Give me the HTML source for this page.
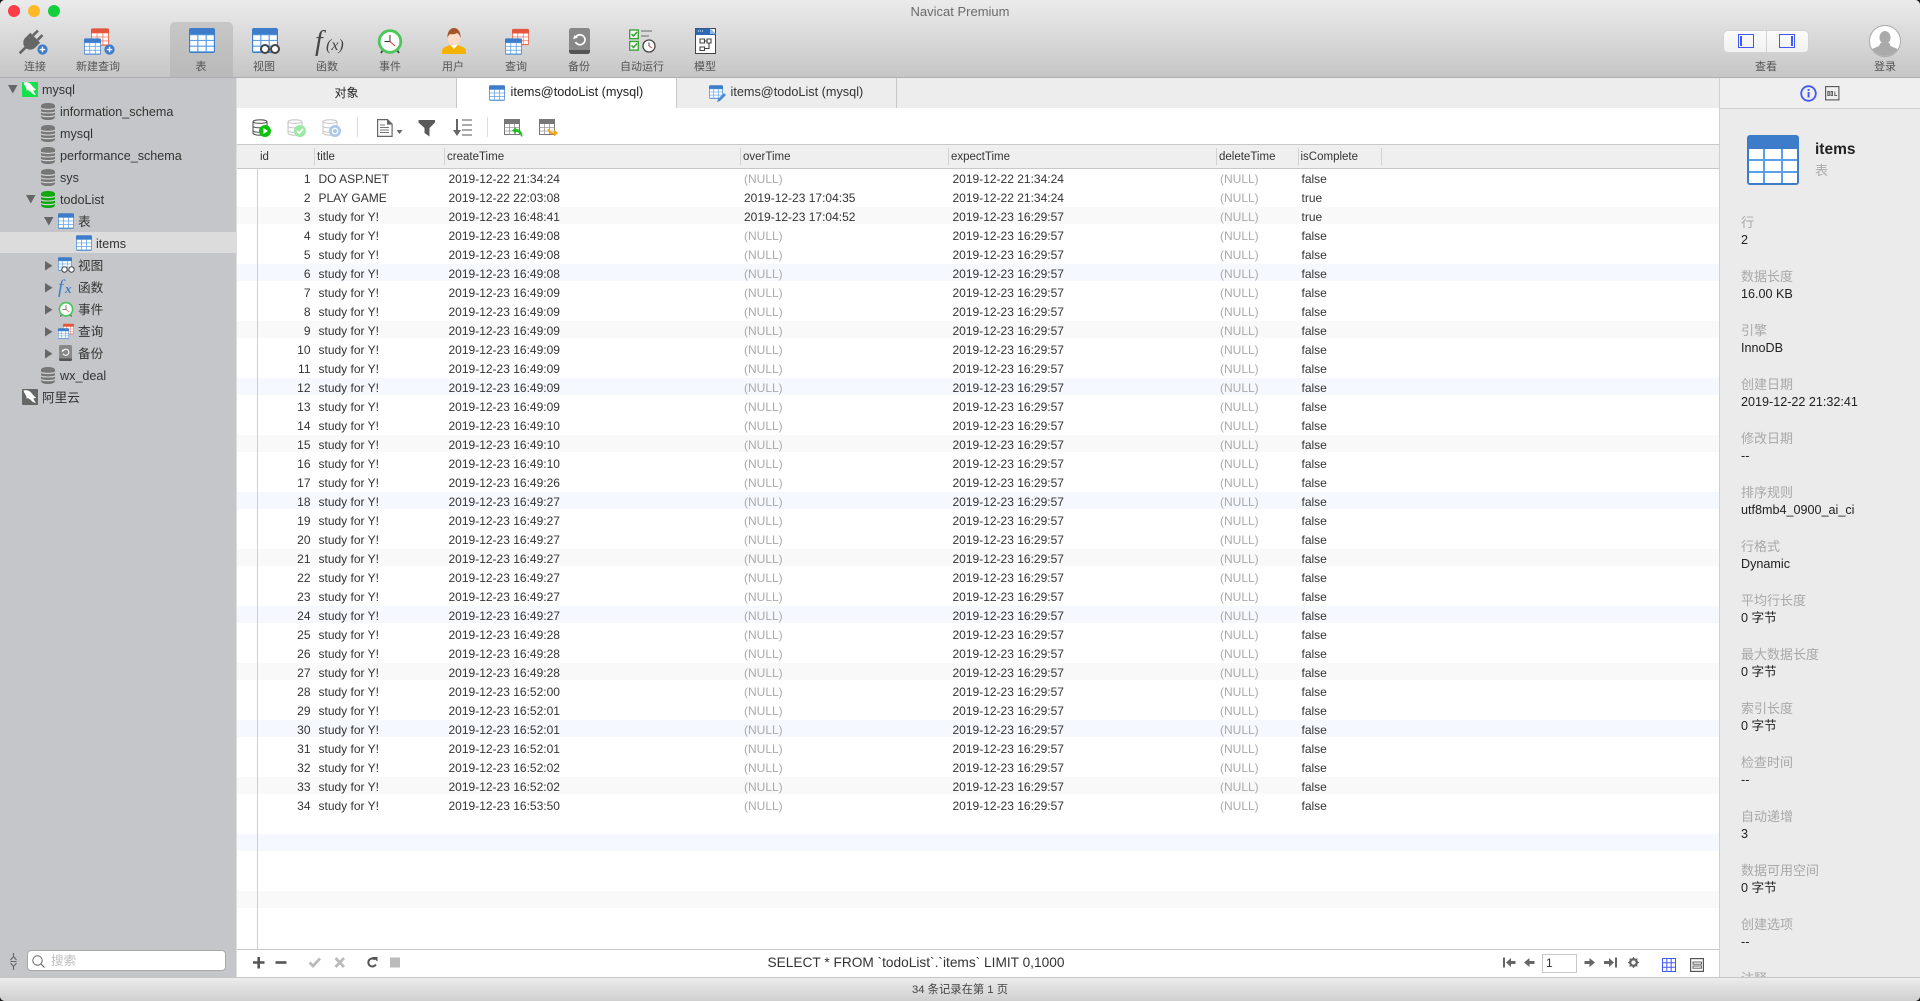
<!DOCTYPE html>
<html><head><meta charset="utf-8"><title>Navicat Premium</title>
<style>
*{margin:0;padding:0;box-sizing:border-box}
html,body{width:1920px;height:1001px;overflow:hidden;background:#1a1a1a}
body{font-family:"Liberation Sans","Noto Sans CJK SC",sans-serif;color:#333;position:relative}
#w{position:absolute;left:0;top:0;width:1920px;height:1001px;border-radius:5px;overflow:hidden;background:#fff}
.a{position:absolute}
svg.a{overflow:visible}
#tb{left:0;top:0;width:1920px;height:78px;background:linear-gradient(#ebebeb,#c6c6c6);border-bottom:1px solid #aeaeae}
.tl{position:absolute;top:61px;width:80px;margin-left:-40px;text-align:center;font-size:11px;line-height:13px;color:#555}
#sb{left:0;top:78px;width:236px;height:899px;background:#c5c6c9}
.s{position:absolute;font-size:12.6px;line-height:16px;color:#333;white-space:nowrap}
#bt{left:237px;top:78px;width:1482px;height:30px;background:#ededed}
#sub{left:237px;top:108px;width:1482px;height:37px;background:#fff;border-bottom:1px solid #c8c8c8}
#hd{left:237px;top:145px;width:1482px;height:24px;background:#efefef;border-bottom:1px solid #c8c8c8}
.hs{position:absolute;top:148px;width:1px;height:17px;background:#d2d2d2}
.ht{position:absolute;top:150px;font-size:11.5px;line-height:15px;color:#333}
#g{left:237px;top:169px;width:1482px;height:780px;background:#fff;overflow:hidden}
.bg{position:absolute;left:0;width:1482px;height:17px;background:#f9f9f9}
.bb{position:absolute;left:0;width:1482px;height:17px;background:#f5f8ff}
#rows{position:absolute;left:0;top:0}
.r{position:relative;height:19px;font-size:12px;line-height:19px;width:1482px;white-space:nowrap}
.r span{position:absolute;top:1px}
.r span:nth-child(1){left:23px;width:50.5px;text-align:right}
.r span:nth-child(2){left:81.5px}
.r span:nth-child(3){left:211.5px}
.r span:nth-child(4){left:507px}
.r span:nth-child(5){left:715.5px}
.r span:nth-child(6){left:983px}
.r span:nth-child(7){left:1064.5px}
.r .n{color:#aaa}
#vl{left:257px;top:169px;width:1px;height:780px;background:#cfcfcf}
#bb{left:237px;top:949px;width:1482px;height:28px;background:#fff;border-top:1px solid #c8c8c8}
#rp{left:1719px;top:78px;width:201px;height:899px;background:#ebebeb;border-left:1px solid #d0d0d0;overflow:hidden}
.k{position:absolute;left:21px;font-size:13px;line-height:16px;color:#a8a8a8;white-space:nowrap}
.v{position:absolute;left:21px;font-size:12.6px;line-height:16px;color:#222;white-space:nowrap}
#st{left:0;top:977px;width:1920px;height:24px;background:linear-gradient(#ececec,#cfcfcf);border-top:1px solid #c6c6c6;text-align:center;font-size:11.3px;line-height:24px;color:#444}
</style></head><body><div id="w">
<svg width="0" height="0" style="position:absolute"><defs>
<symbol id="t" viewBox="0 0 26 25"><rect width="26" height="25" rx="2" fill="#3d7cc9"/><rect x="1" y="6.5" width="24" height="17.5" fill="#5b9fe8"/><g fill="#fff"><rect x="1.2" y="7.3" width="7" height="4.6"/><rect x="9.4" y="7.3" width="7.2" height="4.6"/><rect x="17.8" y="7.3" width="7" height="4.6"/><rect x="1.2" y="13" width="7" height="4.6"/><rect x="9.4" y="13" width="7.2" height="4.6"/><rect x="17.8" y="13" width="7" height="4.6"/><rect x="1.2" y="18.8" width="7" height="4.4"/><rect x="9.4" y="18.8" width="7.2" height="4.4"/><rect x="17.8" y="18.8" width="7" height="4.4"/></g></symbol>
<symbol id="tr" viewBox="0 0 26 25"><rect width="26" height="25" rx="2" fill="#e4573d"/><rect x="1" y="6.5" width="24" height="17.5" fill="#ee7a62"/><g fill="#fff"><rect x="1.2" y="7.3" width="7" height="4.6"/><rect x="9.4" y="7.3" width="7.2" height="4.6"/><rect x="17.8" y="7.3" width="7" height="4.6"/><rect x="1.2" y="13" width="7" height="4.6"/><rect x="9.4" y="13" width="7.2" height="4.6"/><rect x="17.8" y="13" width="7" height="4.6"/><rect x="1.2" y="18.8" width="7" height="4.4"/><rect x="9.4" y="18.8" width="7.2" height="4.4"/><rect x="17.8" y="18.8" width="7" height="4.4"/></g></symbol>
<symbol id="db" viewBox="0 0 14 17"><path d="M0 3C0 1 3 0 7 0s7 1 7 3v11c0 2-3 3-7 3s-7-1-7-3z" fill="currentColor"/><path d="M0 5.2c2 1.6 12 1.6 14 0M0 8.8c2 1.6 12 1.6 14 0M0 12.4c2 1.6 12 1.6 14 0" fill="none" stroke="#d5d5d8" stroke-width="1.1"/></symbol>
<symbol id="dbo" viewBox="0 0 16 17"><path d="M1 3C1 1.6 4 .8 8 .8S15 1.600 15 3v11c0 1.400-3 2.200-7 2.200S1 15.400 1 14z" fill="#fff" stroke="currentColor" stroke-width="1.100"/><path d="M1 3c2 1.800 12 1.800 14 0M1 7.500c2 1.800 12 1.800 14 0M1 12c2 1.800 12 1.800 14 0" fill="none" stroke="currentColor" stroke-width="1.100"/></symbol>
<symbol id="cl" viewBox="0 0 26 26"><path d="M3 7 7 2.500 10 4.500 5 9zM23 7 19 2.500 16 4.500 21 9z" fill="#3fae4c"/><path d="M6 22 4 25M20 22l2 3" stroke="#444" stroke-width="1.800"/><circle cx="13" cy="13.500" r="10.800" fill="#fff" stroke="#4cc75a" stroke-width="2.800"/><path d="M13 13.500H7.500" stroke="#333" stroke-width="1.100"/><path d="M13 7v6.500" stroke="#333" stroke-width="1"/><path d="M13 13.500l5 4.500" stroke="#e33" stroke-width="1"/></symbol>
<symbol id="bk" viewBox="0 0 21 26"><rect width="21" height="26" rx="2.500" fill="#888"/><path d="M0 22h21v1.500a2.500 2.500 0 0 1-2.500 2.500h-16A2.500 2.500 0 0 1 0 23.500z" fill="#555"/><path d="M6.500 9.500a5 5 0 1 1 0 4.500" fill="none" stroke="#fff" stroke-width="1.700"/><path d="M3.500 10.500h5L6 7z" fill="#fff" transform="rotate(-20 6 9)"/></symbol>
<symbol id="dol" viewBox="0 0 16 16"><path d="M1.500 1.500c3-1 6 0 8 2.500 1.500 2 2.800 3.500 4.500 4.500-.7.800-1.700 1-2.700.8.500 1.500 1.300 3 2.700 4.700-2.300-.2-4.300-1.500-5.500-3.500-1-.2-2-.8-2.600-1.800-.3.500-.8.800-1.400.8.200-1-.1-2-.5-3C3.100 5.200 2 3.500 1.500 1.500z" fill="#fff"/></symbol>
<symbol id="pl" viewBox="0 0 12 12"><circle cx="6" cy="6" r="5.600" fill="#3d7cc9"/><path d="M6 3v6M3 6h6" stroke="#fff" stroke-width="1.500"/></symbol>
<symbol id="tg" viewBox="0 0 18 18"><rect x=".5" y=".5" width="15" height="15" fill="#fff" stroke="#777"/><rect x=".5" y=".5" width="15" height="4.500" fill="#777"/><path d="M.5 8.500h15M.5 12h15M5.500 5v10M10.500 5v10" stroke="#999" stroke-width=".8"/></symbol>
</defs></svg>

<div id="tb" class="a"></div>
<div class="a" style="left:170px;top:22px;width:63px;height:55px;border-radius:5px 5px 0 0;background:linear-gradient(#c7c7c7,#b9b9b9)"></div>
<div class="a" style="left:0;width:1920px;top:4px;text-align:center;font-size:13px;line-height:16px;color:#6b6b6b">Navicat Premium</div>
<div class="a" style="left:8px;top:5px;width:12px;height:12px;border-radius:50%;background:#fc3d48"></div>
<div class="a" style="left:28px;top:5px;width:12px;height:12px;border-radius:50%;background:#fdb926"></div>
<div class="a" style="left:48px;top:5px;width:12px;height:12px;border-radius:50%;background:#11cf3d"></div>

<!-- toolbar icons -->
<svg class="a" style="left:17px;top:27px" width="30" height="29" viewBox="0 0 30 29"><g transform="rotate(45 14 15)" fill="#666"><path d="M7 9h14v7a7 7 0 0 1-14 0z"/><rect x="9.500" y="2" width="2.600" height="7"/><rect x="15.900" y="2" width="2.600" height="7"/><rect x="12.700" y="22" width="2.600" height="9"/></g></svg>
<svg class="a" style="left:36.500px;top:44px" width="11" height="11"><use href="#pl"/></svg>
<svg class="a" style="left:91px;top:28px" width="18" height="18"><use href="#tr"/></svg>
<svg class="a" style="left:84px;top:38px" width="17" height="17"><use href="#t"/></svg>
<svg class="a" style="left:104px;top:44px" width="11" height="11"><use href="#pl"/></svg>
<svg class="a" style="left:189px;top:28px" width="26" height="25"><use href="#t"/></svg>
<svg class="a" style="left:252px;top:28px" width="26" height="25"><use href="#t"/></svg>
<svg class="a" style="left:258px;top:44px" width="23" height="10" viewBox="0 0 23 10"><circle cx="7" cy="5" r="4" fill="#fff" stroke="#444" stroke-width="2"/><circle cx="17" cy="5" r="4" fill="#fff" stroke="#444" stroke-width="2"/></svg>
<svg class="a" style="left:312px;top:26px" width="34" height="30" viewBox="0 0 34 30"><text x="3" y="24" font-family="Liberation Serif,serif" font-style="italic" font-size="28" fill="#444">f</text><text x="14" y="24" font-family="Liberation Serif,serif" font-style="italic" font-size="16" fill="#444">(x)</text></svg>
<svg class="a" style="left:377px;top:28px" width="26" height="26"><use href="#cl"/></svg>
<svg class="a" style="left:442px;top:28px" width="24" height="26" viewBox="0 0 24 26"><path d="M0 26v-3c0-3 3-4 8-6h8c5 2 8 3 8 6v3z" fill="#f4b300"/><ellipse cx="12" cy="10" rx="6.500" ry="8.500" fill="#fbdcc8"/><path d="M5.500 10C5 4 8 0 12 0s7 4 6.500 10c-1-3-2-4.500-3.500-5-2 1.500-6 1.500-7 1-.8.800-2 2-2.500 4z" fill="#a4552a"/><path d="M8.500 17 12 21l3.500-4z" fill="#fff"/></svg>
<svg class="a" style="left:512px;top:28px" width="17" height="18"><use href="#tr"/></svg>
<svg class="a" style="left:505px;top:38px" width="17" height="17"><use href="#t"/></svg>
<svg class="a" style="left:569px;top:28px" width="21" height="26"><use href="#bk"/></svg>
<svg class="a" style="left:629px;top:29px" width="28" height="25" viewBox="0 0 28 25"><rect x=".7" y="1" width="8.600" height="8.600" fill="#fff" stroke="#3aa535" stroke-width="1.400"/><rect x=".7" y="12.500" width="8.600" height="8.600" fill="#fff" stroke="#3aa535" stroke-width="1.400"/><path d="M2.500 5l2 2 3.500-4M2.500 16.500l2 2 3.500-4" fill="none" stroke="#3aa535" stroke-width="1.600"/><path d="M12 2h11M12 7h8" stroke="#999" stroke-width="1.700"/><circle cx="20" cy="17" r="6" fill="#fff" stroke="#444" stroke-width="1.300"/><path d="M20 17v-3.500" stroke="#444"/><path d="M20 17l3 2" stroke="#e33"/></svg>
<svg class="a" style="left:695px;top:28px" width="21" height="26" viewBox="0 0 21 26"><rect x=".5" y=".5" width="20" height="25" fill="#fff" stroke="#444"/><path d="M.5.500h14l6 5.500v1H.5z" fill="#2f69b3"/><path d="M15 0l6 6h-6z" fill="#8ab8ec"/><path d="M3 3h1M5 3h1M7 3h1" stroke="#fff"/><path d="M5 11h4.500v4H5zM12 11h4v4h-4zM5 19h4.500v3.500H5zM9.500 13H12M14 15v5.500H9.500" fill="none" stroke="#444" stroke-width="1.100"/></svg>
<div class="a" style="left:1723px;top:30px;width:86px;height:23px;background:linear-gradient(#fbfbfb,#f1f1f1);border:1px solid #d3d3d3;border-radius:5px"></div>
<div class="a" style="left:1766px;top:30px;width:1px;height:23px;background:#d3d3d3"></div>
<svg class="a" style="left:1738px;top:34px" width="16" height="14"><rect x=".5" y=".5" width="15" height="13" fill="none" stroke="#4058f5"/><rect x="2" y="2" width="2" height="10" fill="#4058f5"/></svg>
<svg class="a" style="left:1779px;top:34px" width="16" height="14"><rect x=".5" y=".5" width="15" height="13" fill="none" stroke="#4058f5"/><rect x="12" y="2" width="2" height="10" fill="#4058f5"/></svg>
<svg class="a" style="left:1869px;top:25px" width="32" height="32" viewBox="0 0 32 32"><circle cx="16" cy="16" r="15.500" fill="#fff" stroke="#aaa"/><clipPath id="av"><circle cx="16" cy="16" r="15"/></clipPath><g clip-path="url(#av)" fill="#aaa"><ellipse cx="16" cy="12.500" rx="5.500" ry="6.500"/><path d="M11.500 18h9l1 3 7 3v8H3v-8l7-3z"/></g></svg>
<div class="tl" style="left:35px">连接</div><div class="tl" style="left:98px">新建查询</div><div class="tl" style="left:201px">表</div><div class="tl" style="left:264px">视图</div><div class="tl" style="left:327px">函数</div><div class="tl" style="left:390px">事件</div><div class="tl" style="left:453px">用户</div><div class="tl" style="left:516px">查询</div><div class="tl" style="left:579px">备份</div><div class="tl" style="left:642px">自动运行</div><div class="tl" style="left:705px">模型</div><div class="tl" style="left:1766px">查看</div><div class="tl" style="left:1885px">登录</div>

<!-- sidebar -->
<div id="sb" class="a"></div>
<div class="a" style="left:236px;top:78px;width:1px;height:899px;background:#dcdcdc"></div>
<div class="a" style="left:0;top:232px;width:236px;height:21px;background:#dcdcdc"></div>
<svg class="a" style="left:8px;top:85px" width="10" height="9"><path d="M0 0h9.500L4.800 8.500z" fill="#666"/></svg>
<svg class="a" style="left:26px;top:195px" width="10" height="9"><path d="M0 0h9.500L4.800 8.500z" fill="#666"/></svg>
<svg class="a" style="left:44px;top:217px" width="10" height="9"><path d="M0 0h9.500L4.800 8.500z" fill="#666"/></svg>
<svg class="a" style="left:45px;top:261px" width="9" height="10"><path d="M0 0v9.500L7.500 4.800z" fill="#666"/></svg>
<svg class="a" style="left:45px;top:283px" width="9" height="10"><path d="M0 0v9.500L7.500 4.800z" fill="#666"/></svg>
<svg class="a" style="left:45px;top:305px" width="9" height="10"><path d="M0 0v9.500L7.500 4.800z" fill="#666"/></svg>
<svg class="a" style="left:45px;top:327px" width="9" height="10"><path d="M0 0v9.500L7.500 4.800z" fill="#666"/></svg>
<svg class="a" style="left:45px;top:349px" width="9" height="10"><path d="M0 0v9.500L7.500 4.800z" fill="#666"/></svg>
<div class="a" style="left:22px;top:82px;width:16px;height:15px;background:#14e04a"></div>
<svg class="a" style="left:22px;top:81px" width="16" height="16"><use href="#dol"/></svg>
<div class="a" style="left:22px;top:389px;width:16px;height:16px;background:#666;border-radius:1px"></div>
<svg class="a" style="left:22px;top:389px" width="16" height="16"><use href="#dol"/></svg>
<svg class="a" style="left:41px;top:103px;color:#777" width="14" height="17"><use href="#db"/></svg>
<svg class="a" style="left:41px;top:125px;color:#777" width="14" height="17"><use href="#db"/></svg>
<svg class="a" style="left:41px;top:147px;color:#777" width="14" height="17"><use href="#db"/></svg>
<svg class="a" style="left:41px;top:169px;color:#777" width="14" height="17"><use href="#db"/></svg>
<svg class="a" style="left:41px;top:191px;color:#0fa80f" width="14" height="17"><use href="#db"/></svg>
<svg class="a" style="left:41px;top:367px;color:#777" width="14" height="17"><use href="#db"/></svg>
<svg class="a" style="left:58px;top:213px" width="16" height="16"><use href="#t"/></svg>
<svg class="a" style="left:76px;top:235px" width="16" height="16"><use href="#t"/></svg>
<svg class="a" style="left:58px;top:257px" width="14" height="14"><use href="#t"/></svg>
<svg class="a" style="left:61px;top:266px" width="14" height="7" viewBox="0 0 14 7"><circle cx="3.500" cy="3.500" r="2.700" fill="#fff" stroke="#444"/><circle cx="10.500" cy="3.500" r="2.700" fill="#fff" stroke="#444"/></svg>
<svg class="a" style="left:58px;top:278px" width="17" height="18" viewBox="0 0 17 18"><text x="0" y="15" font-family="Liberation Serif,serif" font-style="italic" font-size="19" fill="#3d7cc9">f</text><text x="7" y="15" font-family="Liberation Serif,serif" font-style="italic" font-weight="bold" font-size="13" fill="#3d7cc9">x</text></svg>
<svg class="a" style="left:58px;top:301px" width="16" height="16"><use href="#cl"/></svg>
<svg class="a" style="left:63px;top:323px" width="11" height="12"><use href="#tr"/></svg>
<svg class="a" style="left:58px;top:328px" width="11" height="11"><use href="#t"/></svg>
<svg class="a" style="left:59px;top:345px" width="13" height="16"><use href="#bk"/></svg>
<div class="s" style="left:42px;top:82px">mysql</div>
<div class="s" style="left:60px;top:104px">information_schema</div>
<div class="s" style="left:60px;top:126px">mysql</div>
<div class="s" style="left:60px;top:148px">performance_schema</div>
<div class="s" style="left:60px;top:170px">sys</div>
<div class="s" style="left:60px;top:192px">todoList</div>
<div class="s" style="left:78px;top:214px">表</div>
<div class="s" style="left:96px;top:236px">items</div>
<div class="s" style="left:78px;top:258px">视图</div>
<div class="s" style="left:78px;top:280px">函数</div>
<div class="s" style="left:78px;top:302px">事件</div>
<div class="s" style="left:78px;top:324px">查询</div>
<div class="s" style="left:78px;top:346px">备份</div>
<div class="s" style="left:60px;top:368px">wx_deal</div>
<div class="s" style="left:42px;top:390px">阿里云</div>
<svg class="a" style="left:9px;top:953px" width="9" height="17" viewBox="0 0 9 17"><path d="M4.500 0v3M4.500 14v3M1.500 7l3-3.500 3 3.500M1.500 10l3 3.500 3-3.500M1.500 8.500h6" fill="none" stroke="#666" stroke-width="1.100"/></svg>
<div class="a" style="left:27px;top:950px;width:199px;height:21px;background:#fff;border:1px solid #a8a8a8;border-radius:4px"></div>
<svg class="a" style="left:32px;top:955px" width="13" height="13" viewBox="0 0 13 13"><circle cx="5.500" cy="5.500" r="4.700" fill="none" stroke="#666"/><path d="M9 9l3.500 3.500" stroke="#666" stroke-width="1.200"/></svg>
<div class="s" style="left:51px;top:953px;color:#bdbdbd">搜索</div>

<!-- tabs -->
<div id="bt" class="a"></div>
<div class="a" style="left:456px;top:78px;width:1px;height:30px;background:#c8c8c8"></div>
<div class="a" style="left:457px;top:78px;width:219px;height:30px;background:#fff"></div>
<div class="a" style="left:676px;top:78px;width:1px;height:30px;background:#c8c8c8"></div>
<div class="a" style="left:896px;top:78px;width:1px;height:30px;background:#c8c8c8"></div>
<div class="a" style="left:237px;top:78px;width:219px;text-align:center;font-size:12px;line-height:30px;color:#222">对象</div>
<svg class="a" style="left:489px;top:85px" width="16" height="16"><use href="#t"/></svg>
<div class="a" style="left:510.500px;top:84px;font-size:12.7px;line-height:17px;color:#222;white-space:nowrap">items@todoList (mysql)</div>
<svg class="a" style="left:709px;top:85px" width="14" height="14"><use href="#t"/></svg>
<svg class="a" style="left:717px;top:92px" width="10" height="10" viewBox="0 0 10 10"><path d="M0 10l1-3L7 1l2 2-6 6z" fill="#4a8ad8"/></svg>
<div class="a" style="left:730.500px;top:84px;font-size:12.7px;line-height:17px;color:#333;white-space:nowrap">items@todoList (mysql)</div>

<!-- subtoolbar -->
<div id="sub" class="a"></div>
<svg class="a" style="left:252px;top:119px;color:#555" width="16" height="17"><use href="#dbo"/></svg>
<svg class="a" style="left:259px;top:125px" width="12" height="12" viewBox="0 0 12 12"><circle cx="6" cy="6" r="6" fill="#0cc10c"/><path d="M4.500 3v6L9 6z" fill="#fff"/></svg>
<svg class="a" style="left:287px;top:119px;color:#c8c8c8" width="16" height="17"><use href="#dbo"/></svg>
<svg class="a" style="left:294px;top:125px" width="12" height="12" viewBox="0 0 12 12"><circle cx="6" cy="6" r="6" fill="#9be8a4"/><path d="M3 6l2.200 2.200L9 4" fill="none" stroke="#fff" stroke-width="1.700"/></svg>
<svg class="a" style="left:322px;top:119px;color:#c8c8c8" width="16" height="17"><use href="#dbo"/></svg>
<svg class="a" style="left:329px;top:125px" width="12" height="12" viewBox="0 0 12 12"><circle cx="6" cy="6" r="6" fill="#aac8ea"/><circle cx="6" cy="6" r="2.700" fill="none" stroke="#fff" stroke-width="1.300"/></svg>
<div class="a" style="left:357px;top:117px;width:1px;height:20px;background:#dcdcdc"></div>
<svg class="a" style="left:377px;top:119px" width="26" height="18" viewBox="0 0 26 18"><path d="M.6.600h10l4.500 4.500v12.300H.6z" fill="#fff" stroke="#666" stroke-width="1.200"/><path d="M10 .6v5h5z" fill="#666"/><path d="M3 6h5M3 8.500h9M3 11h9M3 13.500h9" stroke="#777"/><path d="M19.500 11h6L22.500 15z" fill="#666"/></svg>
<svg class="a" style="left:417px;top:119px" width="20" height="18" viewBox="0 0 20 18"><path d="M0 1h16.500v2.500L11 9v8.500L6 14V9L0 3.500z" fill="#5a5a5a" transform="translate(1.500)"/></svg>
<svg class="a" style="left:452px;top:119px" width="20" height="18" viewBox="0 0 20 18"><path d="M5 0v12" stroke="#666" stroke-width="2"/><path d="M1 11h8l-4 6z" fill="#666"/><path d="M10 1h10M10 6h10M10 11h10M10 16h10" stroke="#777" stroke-width="1.200"/></svg>
<div class="a" style="left:487px;top:117px;width:1px;height:20px;background:#dcdcdc"></div>
<svg class="a" style="left:504px;top:119px" width="18" height="18"><use href="#tg"/></svg>
<svg class="a" style="left:512px;top:127px" width="11" height="10" viewBox="0 0 11 10"><path d="M4 0 0 3.500 4 7V5c2.500 0 4 1 5 4.500h1.500C10.500 5 8 2 4 2z" fill="#1fc21f"/></svg>
<svg class="a" style="left:539px;top:119px" width="18" height="18"><use href="#tg"/></svg>
<svg class="a" style="left:547px;top:127px" width="11" height="10" viewBox="0 0 11 10"><path d="M7 2.500 11 6 7 9.500V7.500C4 7.500 1.500 6.500.5 2H2c1 2.500 2.500 3.500 5 3.500z" fill="#f5a11a"/></svg>

<!-- header -->
<div id="hd" class="a"></div>
<div class="hs" style="left:314px"></div><div class="hs" style="left:444px"></div><div class="hs" style="left:740px"></div><div class="hs" style="left:948px"></div><div class="hs" style="left:1216px"></div><div class="hs" style="left:1298px"></div><div class="hs" style="left:1381px"></div>
<div class="ht" style="left:260px">id</div><div class="ht" style="left:317px">title</div><div class="ht" style="left:447px">createTime</div><div class="ht" style="left:743px">overTime</div><div class="ht" style="left:951px">expectTime</div><div class="ht" style="left:1219px">deleteTime</div><div class="ht" style="left:1300.500px">isComplete</div>

<!-- grid -->
<div id="g" class="a">
<div class="bg" style="top:38px"></div><div class="bb" style="top:95px"></div><div class="bg" style="top:152px"></div><div class="bb" style="top:209px"></div><div class="bg" style="top:266px"></div><div class="bb" style="top:323px"></div><div class="bg" style="top:380px"></div><div class="bb" style="top:437px"></div><div class="bg" style="top:494px"></div><div class="bb" style="top:551px"></div><div class="bg" style="top:608px"></div><div class="bb" style="top:665px"></div><div class="bg" style="top:722px"></div>
<div id="rows">
<div class="r"><span>1</span><span>DO ASP.NET</span><span>2019-12-22 21:34:24</span><span class="n">(NULL)</span><span>2019-12-22 21:34:24</span><span class="n">(NULL)</span><span>false</span></div>
<div class="r"><span>2</span><span>PLAY GAME</span><span>2019-12-22 22:03:08</span><span>2019-12-23 17:04:35</span><span>2019-12-22 21:34:24</span><span class="n">(NULL)</span><span>true</span></div>
<div class="r"><span>3</span><span>study for Y!</span><span>2019-12-23 16:48:41</span><span>2019-12-23 17:04:52</span><span>2019-12-23 16:29:57</span><span class="n">(NULL)</span><span>true</span></div>
<div class="r"><span>4</span><span>study for Y!</span><span>2019-12-23 16:49:08</span><span class="n">(NULL)</span><span>2019-12-23 16:29:57</span><span class="n">(NULL)</span><span>false</span></div>
<div class="r"><span>5</span><span>study for Y!</span><span>2019-12-23 16:49:08</span><span class="n">(NULL)</span><span>2019-12-23 16:29:57</span><span class="n">(NULL)</span><span>false</span></div>
<div class="r"><span>6</span><span>study for Y!</span><span>2019-12-23 16:49:08</span><span class="n">(NULL)</span><span>2019-12-23 16:29:57</span><span class="n">(NULL)</span><span>false</span></div>
<div class="r"><span>7</span><span>study for Y!</span><span>2019-12-23 16:49:09</span><span class="n">(NULL)</span><span>2019-12-23 16:29:57</span><span class="n">(NULL)</span><span>false</span></div>
<div class="r"><span>8</span><span>study for Y!</span><span>2019-12-23 16:49:09</span><span class="n">(NULL)</span><span>2019-12-23 16:29:57</span><span class="n">(NULL)</span><span>false</span></div>
<div class="r"><span>9</span><span>study for Y!</span><span>2019-12-23 16:49:09</span><span class="n">(NULL)</span><span>2019-12-23 16:29:57</span><span class="n">(NULL)</span><span>false</span></div>
<div class="r"><span>10</span><span>study for Y!</span><span>2019-12-23 16:49:09</span><span class="n">(NULL)</span><span>2019-12-23 16:29:57</span><span class="n">(NULL)</span><span>false</span></div>
<div class="r"><span>11</span><span>study for Y!</span><span>2019-12-23 16:49:09</span><span class="n">(NULL)</span><span>2019-12-23 16:29:57</span><span class="n">(NULL)</span><span>false</span></div>
<div class="r"><span>12</span><span>study for Y!</span><span>2019-12-23 16:49:09</span><span class="n">(NULL)</span><span>2019-12-23 16:29:57</span><span class="n">(NULL)</span><span>false</span></div>
<div class="r"><span>13</span><span>study for Y!</span><span>2019-12-23 16:49:09</span><span class="n">(NULL)</span><span>2019-12-23 16:29:57</span><span class="n">(NULL)</span><span>false</span></div>
<div class="r"><span>14</span><span>study for Y!</span><span>2019-12-23 16:49:10</span><span class="n">(NULL)</span><span>2019-12-23 16:29:57</span><span class="n">(NULL)</span><span>false</span></div>
<div class="r"><span>15</span><span>study for Y!</span><span>2019-12-23 16:49:10</span><span class="n">(NULL)</span><span>2019-12-23 16:29:57</span><span class="n">(NULL)</span><span>false</span></div>
<div class="r"><span>16</span><span>study for Y!</span><span>2019-12-23 16:49:10</span><span class="n">(NULL)</span><span>2019-12-23 16:29:57</span><span class="n">(NULL)</span><span>false</span></div>
<div class="r"><span>17</span><span>study for Y!</span><span>2019-12-23 16:49:26</span><span class="n">(NULL)</span><span>2019-12-23 16:29:57</span><span class="n">(NULL)</span><span>false</span></div>
<div class="r"><span>18</span><span>study for Y!</span><span>2019-12-23 16:49:27</span><span class="n">(NULL)</span><span>2019-12-23 16:29:57</span><span class="n">(NULL)</span><span>false</span></div>
<div class="r"><span>19</span><span>study for Y!</span><span>2019-12-23 16:49:27</span><span class="n">(NULL)</span><span>2019-12-23 16:29:57</span><span class="n">(NULL)</span><span>false</span></div>
<div class="r"><span>20</span><span>study for Y!</span><span>2019-12-23 16:49:27</span><span class="n">(NULL)</span><span>2019-12-23 16:29:57</span><span class="n">(NULL)</span><span>false</span></div>
<div class="r"><span>21</span><span>study for Y!</span><span>2019-12-23 16:49:27</span><span class="n">(NULL)</span><span>2019-12-23 16:29:57</span><span class="n">(NULL)</span><span>false</span></div>
<div class="r"><span>22</span><span>study for Y!</span><span>2019-12-23 16:49:27</span><span class="n">(NULL)</span><span>2019-12-23 16:29:57</span><span class="n">(NULL)</span><span>false</span></div>
<div class="r"><span>23</span><span>study for Y!</span><span>2019-12-23 16:49:27</span><span class="n">(NULL)</span><span>2019-12-23 16:29:57</span><span class="n">(NULL)</span><span>false</span></div>
<div class="r"><span>24</span><span>study for Y!</span><span>2019-12-23 16:49:27</span><span class="n">(NULL)</span><span>2019-12-23 16:29:57</span><span class="n">(NULL)</span><span>false</span></div>
<div class="r"><span>25</span><span>study for Y!</span><span>2019-12-23 16:49:28</span><span class="n">(NULL)</span><span>2019-12-23 16:29:57</span><span class="n">(NULL)</span><span>false</span></div>
<div class="r"><span>26</span><span>study for Y!</span><span>2019-12-23 16:49:28</span><span class="n">(NULL)</span><span>2019-12-23 16:29:57</span><span class="n">(NULL)</span><span>false</span></div>
<div class="r"><span>27</span><span>study for Y!</span><span>2019-12-23 16:49:28</span><span class="n">(NULL)</span><span>2019-12-23 16:29:57</span><span class="n">(NULL)</span><span>false</span></div>
<div class="r"><span>28</span><span>study for Y!</span><span>2019-12-23 16:52:00</span><span class="n">(NULL)</span><span>2019-12-23 16:29:57</span><span class="n">(NULL)</span><span>false</span></div>
<div class="r"><span>29</span><span>study for Y!</span><span>2019-12-23 16:52:01</span><span class="n">(NULL)</span><span>2019-12-23 16:29:57</span><span class="n">(NULL)</span><span>false</span></div>
<div class="r"><span>30</span><span>study for Y!</span><span>2019-12-23 16:52:01</span><span class="n">(NULL)</span><span>2019-12-23 16:29:57</span><span class="n">(NULL)</span><span>false</span></div>
<div class="r"><span>31</span><span>study for Y!</span><span>2019-12-23 16:52:01</span><span class="n">(NULL)</span><span>2019-12-23 16:29:57</span><span class="n">(NULL)</span><span>false</span></div>
<div class="r"><span>32</span><span>study for Y!</span><span>2019-12-23 16:52:02</span><span class="n">(NULL)</span><span>2019-12-23 16:29:57</span><span class="n">(NULL)</span><span>false</span></div>
<div class="r"><span>33</span><span>study for Y!</span><span>2019-12-23 16:52:02</span><span class="n">(NULL)</span><span>2019-12-23 16:29:57</span><span class="n">(NULL)</span><span>false</span></div>
<div class="r"><span>34</span><span>study for Y!</span><span>2019-12-23 16:53:50</span><span class="n">(NULL)</span><span>2019-12-23 16:29:57</span><span class="n">(NULL)</span><span>false</span></div>
</div></div>
<div id="vl" class="a"></div>

<!-- bottom bar -->
<div id="bb" class="a"></div>
<svg class="a" style="left:253px;top:956px" width="150" height="13" viewBox="0 0 150 13"><path d="M0 6.500h11.500M5.700 1v11.500" stroke="#555" stroke-width="2.600"/><path d="M22.500 6.500h11" stroke="#555" stroke-width="2.600"/><path d="M56.500 6.500l3.500 3.500 7-7.500" fill="none" stroke="#bbb" stroke-width="2.800"/><path d="M82.500 2l8.500 9M91 2l-8.500 9" stroke="#bbb" stroke-width="2.800"/><path d="M122 3.500a4 4 0 1 0 .8 5" fill="none" stroke="#555" stroke-width="2"/><path d="M119 1h5.500v4.500z" fill="#555"/><rect x="137" y="1.500" width="10" height="10" fill="#bbb"/></svg>
<div class="a" style="left:600px;top:954px;width:632px;text-align:center;font-size:13.7px;line-height:18px;color:#333;white-space:nowrap">SELECT * FROM `todoList`.`items` LIMIT 0,1000</div>
<svg class="a" style="left:1503px;top:956px" width="40" height="13" viewBox="0 0 40 13"><path d="M1 1.500v10" stroke="#666" stroke-width="2"/><path d="M3 6.500 8 2v3h4.500v3H8v3z" fill="#666"/><path d="M21 6.500 26.500 2v3h5v3h-5v3z" fill="#666"/></svg>
<div class="a" style="left:1542px;top:954px;width:35px;height:19px;border:1px solid #c8c8c8;background:#fff;font-size:12px;line-height:17px;padding-left:3px;color:#333">1</div>
<svg class="a" style="left:1584px;top:956px" width="35" height="13" viewBox="0 0 35 13"><path d="M11 6.500 5.500 2v3h-5v3h5v3z" fill="#666"/><path d="M30 6.500 25 2v3h-5v3h5v3z" fill="#666"/><path d="M32 1.500v10" stroke="#666" stroke-width="2"/></svg>
<svg class="a" style="left:1628px;top:957px" width="11" height="11" viewBox="0 0 11 11"><circle cx="5.500" cy="5.500" r="3.300" fill="none" stroke="#666" stroke-width="2.300"/><path d="M5.500 0v2M5.500 9v2M0 5.500h2M9 5.500h2M1.600 1.600 3 3M8 8l1.400 1.400M9.400 1.600 8 3M3 8 1.600 9.400" stroke="#666" stroke-width="1.300"/></svg>
<svg class="a" style="left:1662px;top:958px" width="14" height="14" viewBox="0 0 14 14"><path d="M.5.500h13v13H.5zM.5 4.800h13M.5 9.200h13M4.800.5v13M9.200.5v13" fill="none" stroke="#4058f5"/></svg>
<svg class="a" style="left:1690px;top:958px" width="14" height="14" viewBox="0 0 14 14"><rect x=".6" y=".6" width="12.800" height="12.800" fill="none" stroke="#555" stroke-width="1.200"/><rect x="3" y="4" width="8.500" height="2.200" fill="none" stroke="#555" stroke-width=".9"/><rect x="3" y="8" width="8.500" height="2.200" fill="none" stroke="#555" stroke-width=".9"/></svg>

<!-- right panel -->
<div id="rp" class="a">
<div class="a" style="left:0;top:0;width:200px;height:31px;background:#efefef;border-bottom:1px solid #d0d0d0"></div>
<svg class="a" style="left:80px;top:7px" width="17" height="17" viewBox="0 0 17 17"><circle cx="8.500" cy="8.500" r="7.300" fill="none" stroke="#4058f5" stroke-width="1.800"/><rect x="7.600" y="7" width="1.900" height="5.500" fill="#4058f5"/><rect x="7.600" y="4" width="1.900" height="1.900" fill="#4058f5"/></svg>
<svg class="a" style="left:105px;top:8px" width="15" height="15" viewBox="0 0 15 15"><rect x=".6" y=".6" width="13.300" height="13.300" fill="none" stroke="#555" stroke-width="1.100"/><path d="M2.800 5.500h1.500v4H2.800zM6 5.500h1.500v4H6zM9.800 5.500v4h2.200" fill="none" stroke="#555" stroke-width=".9"/></svg>
<svg class="a" style="left:27px;top:57px" width="53" height="50" viewBox="0 0 53 50"><rect width="52" height="50" rx="3" fill="#3d7cc9"/><rect x="2" y="14" width="48" height="34" fill="#5b9fe8"/><g fill="#fff"><rect x="2" y="14" width="14" height="10"/><rect x="18" y="14" width="16" height="10"/><rect x="36" y="14" width="14" height="10"/><rect x="2" y="26" width="14" height="10"/><rect x="18" y="26" width="16" height="10"/><rect x="36" y="26" width="14" height="10"/><rect x="2" y="38" width="14" height="10"/><rect x="18" y="38" width="16" height="10"/><rect x="36" y="38" width="14" height="10"/></g></svg>
<div class="a" style="left:95px;top:63px;font-size:15.500px;line-height:18px;font-weight:bold;color:#222">items</div>
<div class="a" style="left:95px;top:85px;font-size:13px;line-height:16px;color:#aaa">表</div>
<div class="k" style="top:137px">行</div><div class="v" style="top:154px">2</div>
<div class="k" style="top:191px">数据长度</div><div class="v" style="top:208px">16.00 KB</div>
<div class="k" style="top:245px">引擎</div><div class="v" style="top:262px">InnoDB</div>
<div class="k" style="top:299px">创建日期</div><div class="v" style="top:316px">2019-12-22 21:32:41</div>
<div class="k" style="top:353px">修改日期</div><div class="v" style="top:370px">--</div>
<div class="k" style="top:407px">排序规则</div><div class="v" style="top:424px">utf8mb4_0900_ai_ci</div>
<div class="k" style="top:461px">行格式</div><div class="v" style="top:478px">Dynamic</div>
<div class="k" style="top:515px">平均行长度</div><div class="v" style="top:532px">0 字节</div>
<div class="k" style="top:569px">最大数据长度</div><div class="v" style="top:586px">0 字节</div>
<div class="k" style="top:623px">索引长度</div><div class="v" style="top:640px">0 字节</div>
<div class="k" style="top:677px">检查时间</div><div class="v" style="top:694px">--</div>
<div class="k" style="top:731px">自动递增</div><div class="v" style="top:748px">3</div>
<div class="k" style="top:785px">数据可用空间</div><div class="v" style="top:802px">0 字节</div>
<div class="k" style="top:839px">创建选项</div><div class="v" style="top:856px">--</div>
<div class="k" style="top:893px">注释</div>
</div>

<div id="st" class="a">34 条记录在第 1 页</div>
</div></body></html>
